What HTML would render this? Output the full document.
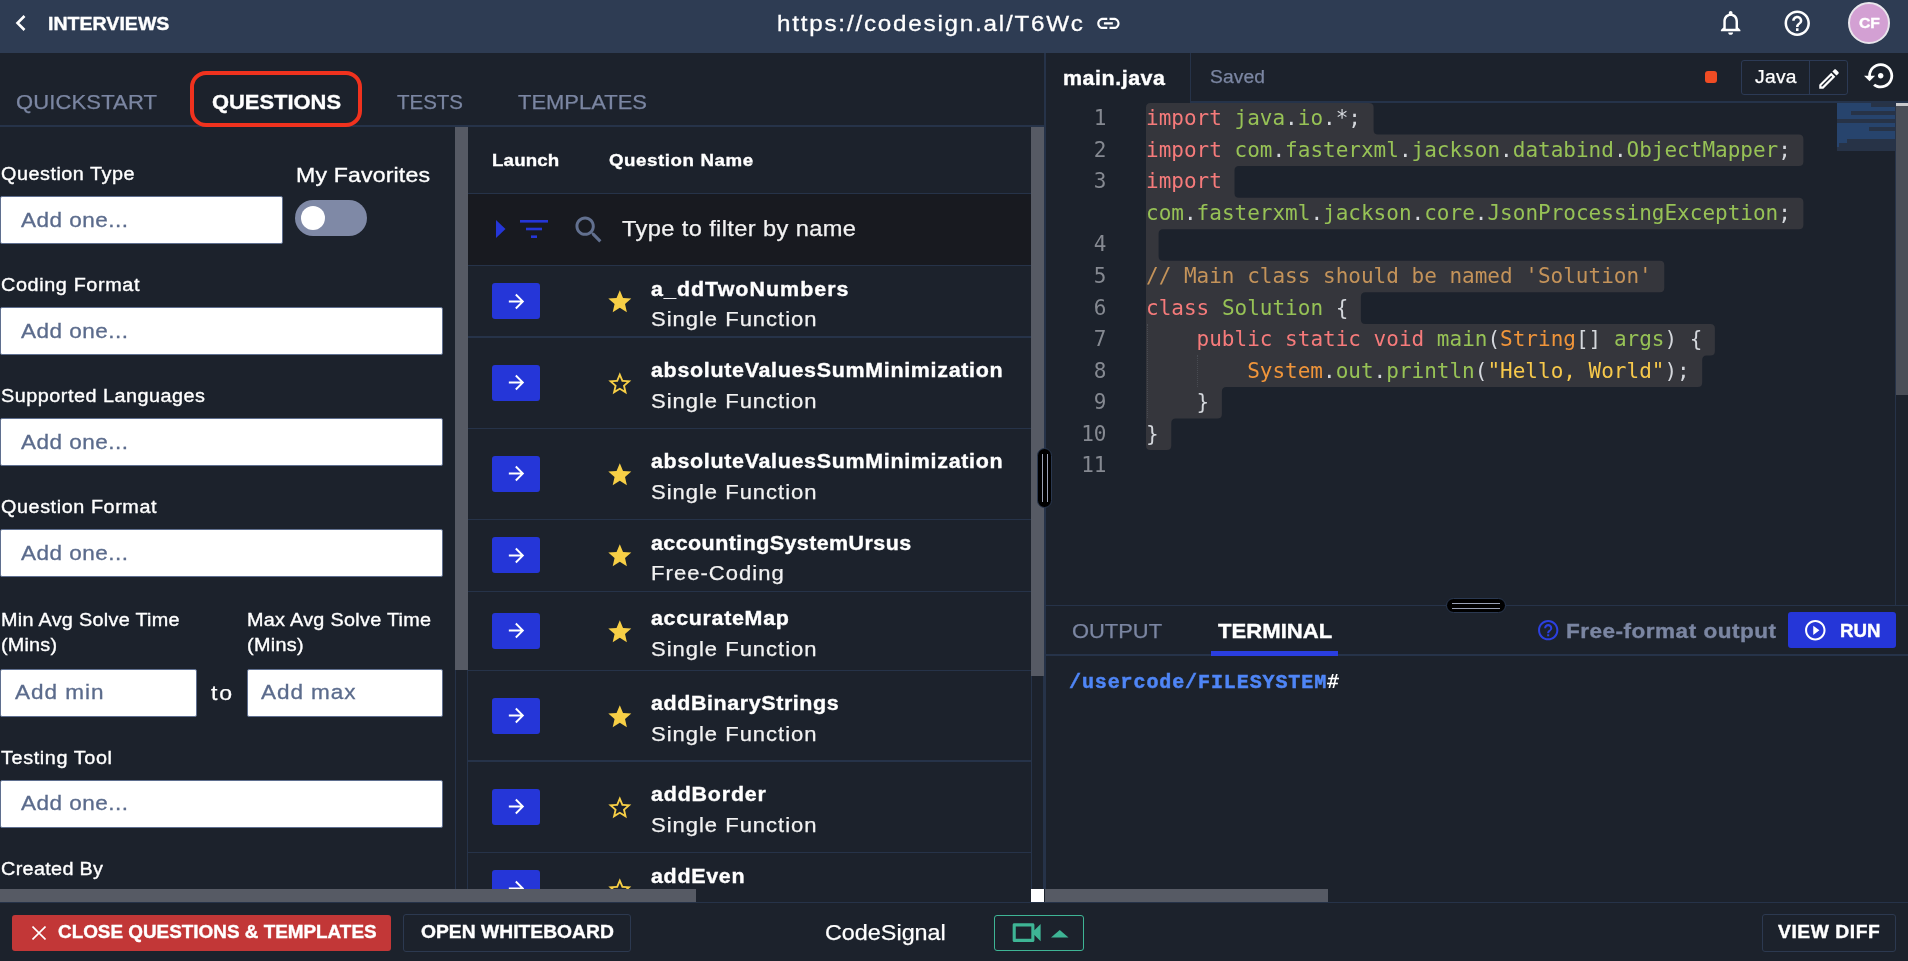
<!DOCTYPE html>
<html lang="en"><head><meta charset="utf-8"><title>CodeSignal Interview</title>
<style>
html,body{margin:0;padding:0;background:#1c222c;}
body{width:1908px;height:961px;position:relative;overflow:hidden;font-family:'Liberation Sans', sans-serif;}
#app{will-change:transform;position:absolute;left:0;top:0;width:1908px;height:961px;}
#app div,#app svg,#app span.t,#app span.c{position:absolute;}
span.t{transform-origin:0 50%;white-space:pre;line-height:1;font-family:'Liberation Sans', sans-serif;}
span.c{white-space:pre;font-family:'DejaVu Sans Mono', 'Liberation Mono', monospace;font-size:21px;line-height:31.5px;}
</style></head>
<body><div id="app">
<div style="left:0px;top:0px;width:1908px;height:53px;background:#2e3c53"></div>
<div style="left:0px;top:125px;width:1045px;height:1.5px;background:#263349"></div>
<div style="left:190px;top:70.5px;width:172px;height:56.5px;box-sizing:border-box;border:4px solid #f0321e;border-radius:16px"></div>
<div style="left:0px;top:196px;width:283px;height:48px;background:#fff;box-sizing:border-box;border:1px solid #5f6f8f;border-radius:2px"></div>
<div style="left:0px;top:307px;width:443px;height:48px;background:#fff;box-sizing:border-box;border:1px solid #5f6f8f;border-radius:2px"></div>
<div style="left:0px;top:418px;width:443px;height:48px;background:#fff;box-sizing:border-box;border:1px solid #5f6f8f;border-radius:2px"></div>
<div style="left:0px;top:529px;width:443px;height:48px;background:#fff;box-sizing:border-box;border:1px solid #5f6f8f;border-radius:2px"></div>
<div style="left:0px;top:669px;width:196.5px;height:47.5px;background:#fff;box-sizing:border-box;border:1px solid #5f6f8f;border-radius:2px"></div>
<div style="left:246.5px;top:669px;width:196.5px;height:47.5px;background:#fff;box-sizing:border-box;border:1px solid #5f6f8f;border-radius:2px"></div>
<div style="left:0px;top:780px;width:443px;height:47.5px;background:#fff;box-sizing:border-box;border:1px solid #5f6f8f;border-radius:2px"></div>
<div style="left:295px;top:200px;width:72px;height:36px;background:#7f89a6;border-radius:18px"></div>
<div style="left:301px;top:206px;width:24px;height:24px;background:#fff;border-radius:12px"></div>
<div style="left:455px;top:670px;width:1px;height:219px;background:#263349"></div>
<div style="left:467px;top:670px;width:1px;height:219px;background:#263349"></div>
<div style="left:455px;top:127px;width:13px;height:543px;background:#565a64"></div>
<div style="left:468px;top:193px;width:563px;height:1.2px;background:#263349"></div>
<div style="left:468px;top:194px;width:563px;height:71px;background:#181a20"></div>
<div style="left:468px;top:336.4px;width:563px;height:1.2px;background:#263349"></div>
<div style="left:468px;top:427.7px;width:563px;height:1.2px;background:#263349"></div>
<div style="left:468px;top:518.6px;width:563px;height:1.2px;background:#263349"></div>
<div style="left:468px;top:590.6px;width:563px;height:1.2px;background:#263349"></div>
<div style="left:468px;top:669.7px;width:563px;height:1.2px;background:#263349"></div>
<div style="left:468px;top:760.4px;width:563px;height:1.2px;background:#263349"></div>
<div style="left:468px;top:851.7px;width:563px;height:1.2px;background:#263349"></div>
<div style="left:468px;top:923.7px;width:563px;height:1.2px;background:#263349"></div>
<div style="left:468px;top:264.6px;width:563px;height:1.2px;background:#263349"></div>
<div style="left:1031px;top:676px;width:1px;height:213px;background:#263349"></div>
<div style="left:1043px;top:676px;width:1px;height:213px;background:#263349"></div>
<div style="left:1031px;top:127px;width:13px;height:549px;background:#565a64"></div>
<div style="left:1044px;top:53px;width:2px;height:849px;background:#263349"></div>
<div style="left:492px;top:283.25px;width:48px;height:36px;background:#2536d8;border-radius:3px"></div>
<svg style="left:504.5px;top:289.75px;" width="23" height="23" viewBox="0 0 24 24"><path fill="#fff" d="M12 4l-1.41 1.41L16.17 11H4v2h12.17l-5.58 5.59L12 20l8-8z"/></svg>
<svg style="left:606.2px;top:288.45px;" width="27.6" height="27.6" viewBox="0 0 24 24"><path fill="#f7cf46" d="M12 17.27L18.18 21l-1.64-7.03L22 9.24l-7.19-.61L12 2 9.19 8.63 2 9.24l5.46 4.73L5.82 21z"/></svg>
<div style="left:492px;top:364.65px;width:48px;height:36px;background:#2536d8;border-radius:3px"></div>
<svg style="left:504.5px;top:371.15px;" width="23" height="23" viewBox="0 0 24 24"><path fill="#fff" d="M12 4l-1.41 1.41L16.17 11H4v2h12.17l-5.58 5.59L12 20l8-8z"/></svg>
<svg style="left:606.2px;top:369.85px;" width="27.6" height="27.6" viewBox="0 0 24 24"><path fill="#f7cf46" d="M22 9.24l-7.19-.62L12 2 9.19 8.63 2 9.24l5.46 4.73L5.82 21 12 17.27 18.18 21l-1.63-7.03L22 9.24zM12 15.4l-3.76 2.27 1-4.28-3.32-2.88 4.38-.38L12 6.1l1.71 4.04 4.38.38-3.32 2.88 1 4.28L12 15.4z"/></svg>
<div style="left:492px;top:455.75px;width:48px;height:36px;background:#2536d8;border-radius:3px"></div>
<svg style="left:504.5px;top:462.25px;" width="23" height="23" viewBox="0 0 24 24"><path fill="#fff" d="M12 4l-1.41 1.41L16.17 11H4v2h12.17l-5.58 5.59L12 20l8-8z"/></svg>
<svg style="left:606.2px;top:460.95px;" width="27.6" height="27.6" viewBox="0 0 24 24"><path fill="#f7cf46" d="M12 17.27L18.18 21l-1.64-7.03L22 9.24l-7.19-.61L12 2 9.19 8.63 2 9.24l5.46 4.73L5.82 21z"/></svg>
<div style="left:492px;top:537.2px;width:48px;height:36px;background:#2536d8;border-radius:3px"></div>
<svg style="left:504.5px;top:543.7px;" width="23" height="23" viewBox="0 0 24 24"><path fill="#fff" d="M12 4l-1.41 1.41L16.17 11H4v2h12.17l-5.58 5.59L12 20l8-8z"/></svg>
<svg style="left:606.2px;top:542.4px;" width="27.6" height="27.6" viewBox="0 0 24 24"><path fill="#f7cf46" d="M12 17.27L18.18 21l-1.64-7.03L22 9.24l-7.19-.61L12 2 9.19 8.63 2 9.24l5.46 4.73L5.82 21z"/></svg>
<div style="left:492px;top:612.75px;width:48px;height:36px;background:#2536d8;border-radius:3px"></div>
<svg style="left:504.5px;top:619.25px;" width="23" height="23" viewBox="0 0 24 24"><path fill="#fff" d="M12 4l-1.41 1.41L16.17 11H4v2h12.17l-5.58 5.59L12 20l8-8z"/></svg>
<svg style="left:606.2px;top:617.95px;" width="27.6" height="27.6" viewBox="0 0 24 24"><path fill="#f7cf46" d="M12 17.27L18.18 21l-1.64-7.03L22 9.24l-7.19-.61L12 2 9.19 8.63 2 9.24l5.46 4.73L5.82 21z"/></svg>
<div style="left:492px;top:697.65px;width:48px;height:36px;background:#2536d8;border-radius:3px"></div>
<svg style="left:504.5px;top:704.15px;" width="23" height="23" viewBox="0 0 24 24"><path fill="#fff" d="M12 4l-1.41 1.41L16.17 11H4v2h12.17l-5.58 5.59L12 20l8-8z"/></svg>
<svg style="left:606.2px;top:702.85px;" width="27.6" height="27.6" viewBox="0 0 24 24"><path fill="#f7cf46" d="M12 17.27L18.18 21l-1.64-7.03L22 9.24l-7.19-.61L12 2 9.19 8.63 2 9.24l5.46 4.73L5.82 21z"/></svg>
<div style="left:492px;top:788.65px;width:48px;height:36px;background:#2536d8;border-radius:3px"></div>
<svg style="left:504.5px;top:795.15px;" width="23" height="23" viewBox="0 0 24 24"><path fill="#fff" d="M12 4l-1.41 1.41L16.17 11H4v2h12.17l-5.58 5.59L12 20l8-8z"/></svg>
<svg style="left:606.2px;top:793.85px;" width="27.6" height="27.6" viewBox="0 0 24 24"><path fill="#f7cf46" d="M22 9.24l-7.19-.62L12 2 9.19 8.63 2 9.24l5.46 4.73L5.82 21 12 17.27 18.18 21l-1.63-7.03L22 9.24zM12 15.4l-3.76 2.27 1-4.28-3.32-2.88 4.38-.38L12 6.1l1.71 4.04 4.38.38-3.32 2.88 1 4.28L12 15.4z"/></svg>
<div style="left:492px;top:870.3px;width:48px;height:36px;background:#2536d8;border-radius:3px"></div>
<svg style="left:504.5px;top:876.8px;" width="23" height="23" viewBox="0 0 24 24"><path fill="#fff" d="M12 4l-1.41 1.41L16.17 11H4v2h12.17l-5.58 5.59L12 20l8-8z"/></svg>
<svg style="left:606.2px;top:875.5px;" width="27.6" height="27.6" viewBox="0 0 24 24"><path fill="#f7cf46" d="M22 9.24l-7.19-.62L12 2 9.19 8.63 2 9.24l5.46 4.73L5.82 21 12 17.27 18.18 21l-1.63-7.03L22 9.24zM12 15.4l-3.76 2.27 1-4.28-3.32-2.88 4.38-.38L12 6.1l1.71 4.04 4.38.38-3.32 2.88 1 4.28L12 15.4z"/></svg>
<svg style="left:9px;top:11.3px;" width="24" height="24" viewBox="0 0 24 24"><path d="M15.5 5 L8.5 12 L15.5 19" fill="none" stroke="#fff" stroke-width="2.6" stroke-linecap="butt"/></svg>
<svg style="left:1094.5px;top:10.1px;" width="26.8" height="26.8" viewBox="0 0 24 24"><path fill="#fff" d="M3.9 12c0-1.71 1.39-3.1 3.1-3.1h4V7H7c-2.76 0-5 2.24-5 5s2.240 5 5 5h4v-1.900H7c-1.710 0-3.100-1.390-3.100-3.100zM8 13h8v-2H8v2zm9-6h-4v1.900h4c1.710 0 3.100 1.390 3.100 3.100s-1.390 3.100-3.100 3.100h-4V17h4c2.760 0 5-2.240 5-5s-2.240-5-5-5z"/></svg>
<svg style="left:1716.3px;top:8px;" width="29.3" height="29.3" viewBox="0 0 24 24"><path fill="#fff" d="M12 22c1.1 0 2-.9 2-2h-4c0 1.1.9 2 2 2zm6-6v-5c0-3.07-1.630-5.640-4.500-6.320V4c0-.83-.67-1.500-1.500-1.500s-1.500.67-1.500 1.500v.68C7.640 5.360 6 7.920 6 11v5l-2 2v1h16v-1l-2-2zm-2 1H8v-6c0-2.480 1.510-4.500 4-4.500s4 2.020 4 4.500v6z"/></svg>
<svg style="left:1781.75px;top:7.75px;" width="30.5" height="30.5" viewBox="0 0 24 24"><path fill="#fff" d="M11 18h2v-2h-2v2zm1-16C6.480 2 2 6.480 2 12s4.480 10 10 10 10-4.480 10-10S17.520 2 12 2zm0 18c-4.410 0-8-3.590-8-8s3.590-8 8-8 8 3.590 8 8-3.590 8-8 8zm0-14c-2.210 0-4 1.790-4 4h2c0-1.100.9-2 2-2s2 .9 2 2c0 2-3 1.750-3 5h2c0-2.250 3-2.500 3-5 0-2.210-1.790-4-4-4z"/></svg>
<div style="left:1848px;top:2px;width:42px;height:42px;box-sizing:border-box;background:#d3a0d3;border:2.5px solid #e9e6ec;border-radius:50%"></div>
<svg style="left:496px;top:220px;" width="10" height="18" viewBox="0 0 10 18"><path d="M0 0 L9.5 9 L0 18z" fill="#2536d8"/></svg>
<svg style="left:520px;top:220px;" width="28" height="18" viewBox="0 0 28 18"><rect x="0" y="0" width="28" height="2.6" fill="#2536d8"/><rect x="6" y="7.7" width="16" height="2.6" fill="#2536d8"/><rect x="11" y="15.4" width="6" height="2.6" fill="#2536d8"/></svg>
<svg style="left:570.5px;top:211.5px;" width="35.7" height="35.7" viewBox="0 0 24 24"><path fill="#62708f" d="M15.5 14h-.79l-.28-.27C15.410 12.590 16 11.110 16 9.500 16 5.910 13.090 3 9.500 3S3 5.910 3 9.500 5.910 16 9.500 16c1.610 0 3.090-.59 4.230-1.570l.27.28v.79l5 4.990L20.490 19l-4.990-5zm-6 0C7.010 14 5 11.990 5 9.500S7.010 5 9.500 5 14 7.010 14 9.500 11.990 14 9.500 14z"/></svg>
<div style="left:1705px;top:71px;width:12.3px;height:12.3px;background:#f04c24;border-radius:3px"></div>
<div style="left:1741px;top:59.5px;width:107px;height:35.5px;box-sizing:border-box;border:1px solid #2c3a55;border-radius:3px"></div>
<div style="left:1809px;top:60px;width:1px;height:34.5px;background:#2c3a55"></div>
<svg style="left:1815.8px;top:66px;" width="26" height="26" viewBox="0 0 24 24"><path fill="#fff" d="M3 17.250V21h3.750L17.810 9.940l-3.750-3.750L3 17.250zM5.920 19H5v-.92l9.060-9.060.92.92L5.920 19zM20.710 5.630l-2.340-2.340c-.2-.2-.45-.29-.71-.29s-.51.1-.7.290l-1.830 1.830 3.750 3.750 1.830-1.830c.39-.39.39-1.020 0-1.410z"/></svg>
<svg style="left:1863.5px;top:58.83px;" width="33.4" height="33.4" viewBox="0 0 24 24"><path fill="#fff" d="M14 12c0-1.100-.9-2-2-2s-2 .9-2 2 .9 2 2 2 2-.9 2-2zm-2-9c-4.970 0-9 4.030-9 9H0l4 4 4-4H5c0-3.870 3.130-7 7-7s7 3.130 7 7-3.130 7-7 7c-1.510 0-2.910-.49-4.060-1.300l-1.420 1.440C8.040 20.300 9.940 21 12 21c4.970 0 9-4.030 9-9s-4.030-9-9-9z"/></svg>
<svg style="left:1535.8px;top:617.8px;" width="24.4" height="24.4" viewBox="0 0 24 24"><path fill="#2c40e0" d="M11 18h2v-2h-2v2zm1-16C6.480 2 2 6.480 2 12s4.480 10 10 10 10-4.480 10-10S17.520 2 12 2zm0 18c-4.410 0-8-3.590-8-8s3.590-8 8-8 8 3.590 8 8-3.590 8-8 8zm0-14c-2.210 0-4 1.790-4 4h2c0-1.100.9-2 2-2s2 .9 2 2c0 2-3 1.750-3 5h2c0-2.250 3-2.500 3-5 0-2.210-1.790-4-4-4z"/></svg>
<div style="left:1788px;top:612px;width:108px;height:36px;background:#2536d8;border-radius:3px"></div>
<svg style="left:1802.7px;top:617.7px;" width="24.6" height="24.6" viewBox="0 0 24 24"><path fill="#fff" d="M10 16.500l6-4.500-6-4.500v9zM12 2C6.480 2 2 6.480 2 12s4.480 10 10 10 10-4.480 10-10S17.520 2 12 2zm0 18c-4.410 0-8-3.590-8-8s3.590-8 8-8 8 3.590 8 8-3.590 8-8 8z"/></svg>
<div style="left:1045px;top:604.6px;width:863px;height:1.4px;background:#263349"></div>
<div style="left:1045px;top:654px;width:863px;height:2px;background:#263349"></div>
<div style="left:1211px;top:651.3px;width:127px;height:4.5px;background:#2a3ee0"></div>
<div style="left:1037px;top:448px;width:15px;height:59.7px;box-sizing:border-box;background:#000;border:1px solid #2a3850;border-radius:8px"></div>
<div style="left:1042.1px;top:454px;width:1.2px;height:48px;background:#9aa1b5"></div>
<div style="left:1047.1px;top:454px;width:1.2px;height:48px;background:#9aa1b5"></div>
<div style="left:1446px;top:597.7px;width:60px;height:15.4px;box-sizing:border-box;background:#000;border:1px solid #2a3850;border-radius:8px"></div>
<div style="left:1452px;top:602.8px;width:48.2px;height:1.3px;background:#9aa1b5"></div>
<div style="left:1452px;top:607.7px;width:48.2px;height:1.3px;background:#9aa1b5"></div>
<svg style="left:0;top:0" width="1908" height="961" viewBox="0 0 1908 961"><path d="M1146.0 107.5 Q1146.0 103.0 1150.5 103.0 L1369.1 103.0 Q1373.6 103.0 1373.6 107.5 L1373.6 130.1 Q1373.6 134.6 1378.1 134.6 L1798.9 134.6 Q1803.4 134.6 1803.4 139.1 L1803.4 161.6 Q1803.4 166.1 1798.9 166.1 L1239.0 166.1 Q1234.5 166.1 1234.5 170.6 L1234.5 193.2 Q1234.5 197.7 1239.0 197.7 L1798.9 197.7 Q1803.4 197.7 1803.4 202.2 L1803.4 224.7 Q1803.4 229.2 1798.9 229.2 L1163.1 229.2 Q1158.6 229.2 1158.6 233.7 L1158.6 256.2 Q1158.6 260.8 1163.1 260.8 L1659.8 260.8 Q1664.3 260.8 1664.3 265.2 L1664.3 287.8 Q1664.3 292.3 1659.8 292.3 L1365.4 292.3 Q1360.9 292.3 1360.9 296.8 L1360.9 319.4 Q1360.9 323.9 1365.4 323.9 L1710.4 323.9 Q1714.9 323.9 1714.9 328.4 L1714.9 350.9 Q1714.9 355.4 1710.4 355.4 L1706.7 355.4 Q1702.2 355.4 1702.2 359.9 L1702.2 382.4 Q1702.2 386.9 1697.7 386.9 L1226.4 386.9 Q1221.9 386.9 1221.9 391.4 L1221.9 414.0 Q1221.9 418.5 1217.4 418.5 L1175.8 418.5 Q1171.3 418.5 1171.3 423.0 L1171.3 445.6 Q1171.3 450.1 1166.8 450.1 L1150.5 450.1 Q1146.0 450.1 1146.0 445.6 Z" fill="#35363c"/></svg>
<span class="c" style="left:1046px;width:60.5px;text-align:right;top:103.2px;color:#858991">1</span>
<span class="c" style="left:1146px;top:103.2px"><span style="color:#f67b7b">import</span><span style="color:#d4d7dc"> </span><span style="color:#97c256">java</span><span style="color:#d4d7dc">.</span><span style="color:#97c256">io</span><span style="color:#d4d7dc">.*;</span></span>
<span class="c" style="left:1046px;width:60.5px;text-align:right;top:134.8px;color:#858991">2</span>
<span class="c" style="left:1146px;top:134.8px"><span style="color:#f67b7b">import</span><span style="color:#d4d7dc"> </span><span style="color:#97c256">com</span><span style="color:#d4d7dc">.</span><span style="color:#97c256">fasterxml</span><span style="color:#d4d7dc">.</span><span style="color:#97c256">jackson</span><span style="color:#d4d7dc">.</span><span style="color:#97c256">databind</span><span style="color:#d4d7dc">.</span><span style="color:#97c256">ObjectMapper</span><span style="color:#d4d7dc">;</span></span>
<span class="c" style="left:1046px;width:60.5px;text-align:right;top:166.3px;color:#858991">3</span>
<span class="c" style="left:1146px;top:166.3px"><span style="color:#f67b7b">import</span><span style="color:#d4d7dc"> </span></span>
<span class="c" style="left:1146px;top:197.8px"><span style="color:#97c256">com</span><span style="color:#d4d7dc">.</span><span style="color:#97c256">fasterxml</span><span style="color:#d4d7dc">.</span><span style="color:#97c256">jackson</span><span style="color:#d4d7dc">.</span><span style="color:#97c256">core</span><span style="color:#d4d7dc">.</span><span style="color:#97c256">JsonProcessingException</span><span style="color:#d4d7dc">;</span></span>
<span class="c" style="left:1046px;width:60.5px;text-align:right;top:229.4px;color:#858991">4</span>
<span class="c" style="left:1046px;width:60.5px;text-align:right;top:260.9px;color:#858991">5</span>
<span class="c" style="left:1146px;top:260.9px"><span style="color:#c4935a">// Main class should be named 'Solution'</span></span>
<span class="c" style="left:1046px;width:60.5px;text-align:right;top:292.5px;color:#858991">6</span>
<span class="c" style="left:1146px;top:292.5px"><span style="color:#f67b7b">class</span><span style="color:#d4d7dc"> </span><span style="color:#97c256">Solution</span><span style="color:#d4d7dc"> {</span></span>
<span class="c" style="left:1046px;width:60.5px;text-align:right;top:324.1px;color:#858991">7</span>
<span class="c" style="left:1146px;top:324.1px"><span style="color:#d4d7dc">    </span><span style="color:#f67b7b">public</span><span style="color:#d4d7dc"> </span><span style="color:#f67b7b">static</span><span style="color:#d4d7dc"> </span><span style="color:#f67b7b">void</span><span style="color:#d4d7dc"> </span><span style="color:#97c256">main</span><span style="color:#d4d7dc">(</span><span style="color:#f0953a">String</span><span style="color:#d4d7dc">[] </span><span style="color:#97c256">args</span><span style="color:#d4d7dc">) {</span></span>
<span class="c" style="left:1046px;width:60.5px;text-align:right;top:355.6px;color:#858991">8</span>
<span class="c" style="left:1146px;top:355.6px"><span style="color:#d4d7dc">        </span><span style="color:#f0953a">System</span><span style="color:#d4d7dc">.</span><span style="color:#97c256">out</span><span style="color:#d4d7dc">.</span><span style="color:#97c256">println</span><span style="color:#d4d7dc">(</span><span style="color:#f7c94b">"Hello, World"</span><span style="color:#d4d7dc">);</span></span>
<span class="c" style="left:1046px;width:60.5px;text-align:right;top:387.1px;color:#858991">9</span>
<span class="c" style="left:1146px;top:387.1px"><span style="color:#d4d7dc">    }</span></span>
<span class="c" style="left:1046px;width:60.5px;text-align:right;top:418.7px;color:#858991">10</span>
<span class="c" style="left:1146px;top:418.7px"><span style="color:#d4d7dc">}</span></span>
<span class="c" style="left:1046px;width:60.5px;text-align:right;top:450.2px;color:#858991">11</span>
<div style="left:1146.5px;top:323.85px;width:0px;height:94.65px;border-left:1px dotted #484b52"></div>
<div style="left:1196.57px;top:355.4px;width:0px;height:31.55px;border-left:1px dotted #484b52"></div>
<div style="left:1190px;top:53px;width:1px;height:49px;background:#263349"></div>
<div style="left:1190px;top:101px;width:718px;height:2px;background:#25334a"></div>
<div style="left:1837px;top:103px;width:58px;height:48px;background:#273347"></div>
<div style="left:1837px;top:103px;width:34px;height:4px;background:#27446d"></div>
<div style="left:1837px;top:107px;width:58px;height:4px;background:#27446d"></div>
<div style="left:1837px;top:111px;width:14px;height:4px;background:#27446d"></div>
<div style="left:1837px;top:115px;width:58px;height:4px;background:#27446d"></div>
<div style="left:1837px;top:123px;width:58px;height:4px;background:#27446d"></div>
<div style="left:1837px;top:127px;width:32px;height:4px;background:#27446d"></div>
<div style="left:1837px;top:131px;width:58px;height:4px;background:#27446d"></div>
<div style="left:1837px;top:135px;width:58px;height:4px;background:#27446d"></div>
<div style="left:1837px;top:139px;width:10px;height:4px;background:#27446d"></div>
<div style="left:1837px;top:143px;width:2px;height:4px;background:#27446d"></div>
<div style="left:1895px;top:103px;width:1px;height:502px;background:#263349"></div>
<div style="left:1895.5px;top:103px;width:12.5px;height:292px;background:#4a4e57"></div>
<div style="left:1896px;top:103px;width:12px;height:3px;background:#c8c9cc"></div>
<span class="t" style="left:1069px;top:670.6px;font-family:'Liberation Mono', monospace;font-size:20px;font-weight:700;color:#4f86f7;letter-spacing:0.9px;-webkit-text-stroke:0.5px #4f86f7">/usercode/FILESYSTEM<span style="font-family:'DejaVu Sans Mono', 'Liberation Mono', monospace;font-weight:400;color:#fff;font-size:20px;-webkit-text-stroke:0">#</span></span>
<span class="t" style="left:48.4px;top:14.8px;font-size:18px;font-weight:700;color:#fff;letter-spacing:0.00px;transform:scaleX(1.087);-webkit-text-stroke:0.35px #fff;">INTERVIEWS</span>
<span class="t" style="left:777.0px;top:13.3px;font-size:22px;font-weight:400;color:#fff;letter-spacing:1.62px;transform:scaleX(1.100);-webkit-text-stroke:0.3px #fff;">https://codesign.al/T6Wc</span>
<span class="t" style="left:16.0px;top:92.1px;font-size:20px;font-weight:400;color:#7b86a2;letter-spacing:0.12px;transform:scaleX(1.100);-webkit-text-stroke:0.25px #7b86a2;">QUICKSTART</span>
<span class="t" style="left:212.0px;top:92.1px;font-size:20px;font-weight:700;color:#fff;letter-spacing:0.00px;transform:scaleX(1.095);-webkit-text-stroke:0.35px #fff;">QUESTIONS</span>
<span class="t" style="left:397.0px;top:92.1px;font-size:20px;font-weight:400;color:#7b86a2;letter-spacing:0.00px;transform:scaleX(1.024);-webkit-text-stroke:0.25px #7b86a2;">TESTS</span>
<span class="t" style="left:518.0px;top:92.1px;font-size:20px;font-weight:400;color:#7b86a2;letter-spacing:0.00px;transform:scaleX(1.098);-webkit-text-stroke:0.25px #7b86a2;">TEMPLATES</span>
<span class="t" style="left:1.0px;top:164.8px;font-size:18px;font-weight:400;color:#fff;letter-spacing:0.47px;transform:scaleX(1.100);-webkit-text-stroke:0.35px #fff;">Question Type</span>
<span class="t" style="left:296.0px;top:164.1px;font-size:21px;font-weight:400;color:#fff;letter-spacing:0.15px;transform:scaleX(1.100);-webkit-text-stroke:0.35px #fff;">My Favorites</span>
<span class="t" style="left:1.0px;top:275.8px;font-size:18px;font-weight:400;color:#fff;letter-spacing:0.57px;transform:scaleX(1.100);-webkit-text-stroke:0.35px #fff;">Coding Format</span>
<span class="t" style="left:1.0px;top:386.8px;font-size:18px;font-weight:400;color:#fff;letter-spacing:0.46px;transform:scaleX(1.100);-webkit-text-stroke:0.35px #fff;">Supported Languages</span>
<span class="t" style="left:1.0px;top:497.8px;font-size:18px;font-weight:400;color:#fff;letter-spacing:0.52px;transform:scaleX(1.100);-webkit-text-stroke:0.35px #fff;">Question Format</span>
<span class="t" style="left:1.0px;top:611.0px;font-size:18px;font-weight:400;color:#fff;letter-spacing:0.27px;transform:scaleX(1.100);-webkit-text-stroke:0.35px #fff;">Min Avg Solve Time</span>
<span class="t" style="left:1.0px;top:635.5px;font-size:18px;font-weight:400;color:#fff;letter-spacing:0.18px;transform:scaleX(1.100);-webkit-text-stroke:0.35px #fff;">(Mins)</span>
<span class="t" style="left:246.5px;top:611.0px;font-size:18px;font-weight:400;color:#fff;letter-spacing:0.27px;transform:scaleX(1.100);-webkit-text-stroke:0.35px #fff;">Max Avg Solve Time</span>
<span class="t" style="left:247.0px;top:635.5px;font-size:18px;font-weight:400;color:#fff;letter-spacing:0.27px;transform:scaleX(1.100);-webkit-text-stroke:0.35px #fff;">(Mins)</span>
<span class="t" style="left:1.0px;top:748.5px;font-size:18px;font-weight:400;color:#fff;letter-spacing:0.56px;transform:scaleX(1.100);-webkit-text-stroke:0.35px #fff;">Testing Tool</span>
<span class="t" style="left:1.0px;top:859.5px;font-size:18px;font-weight:400;color:#fff;letter-spacing:0.30px;transform:scaleX(1.100);-webkit-text-stroke:0.35px #fff;">Created By</span>
<span class="t" style="left:20.5px;top:209.6px;font-size:20.5px;font-weight:400;color:#5b6b8c;letter-spacing:0.42px;transform:scaleX(1.100);-webkit-text-stroke:0.3px #5b6b8c;">Add one...</span>
<span class="t" style="left:20.5px;top:320.6px;font-size:20.5px;font-weight:400;color:#5b6b8c;letter-spacing:0.42px;transform:scaleX(1.100);-webkit-text-stroke:0.3px #5b6b8c;">Add one...</span>
<span class="t" style="left:20.5px;top:431.6px;font-size:20.5px;font-weight:400;color:#5b6b8c;letter-spacing:0.42px;transform:scaleX(1.100);-webkit-text-stroke:0.3px #5b6b8c;">Add one...</span>
<span class="t" style="left:20.5px;top:542.6px;font-size:20.5px;font-weight:400;color:#5b6b8c;letter-spacing:0.42px;transform:scaleX(1.100);-webkit-text-stroke:0.3px #5b6b8c;">Add one...</span>
<span class="t" style="left:20.5px;top:793.1px;font-size:20.5px;font-weight:400;color:#5b6b8c;letter-spacing:0.42px;transform:scaleX(1.100);-webkit-text-stroke:0.3px #5b6b8c;">Add one...</span>
<span class="t" style="left:14.5px;top:682.1px;font-size:20.5px;font-weight:400;color:#5b6b8c;letter-spacing:0.87px;transform:scaleX(1.100);-webkit-text-stroke:0.3px #5b6b8c;">Add min</span>
<span class="t" style="left:260.5px;top:682.1px;font-size:20.5px;font-weight:400;color:#5b6b8c;letter-spacing:0.83px;transform:scaleX(1.100);-webkit-text-stroke:0.3px #5b6b8c;">Add max</span>
<span class="t" style="left:211.0px;top:681.7px;font-size:21px;font-weight:400;color:#fff;letter-spacing:1.58px;transform:scaleX(1.100);-webkit-text-stroke:0.25px #fff;">to</span>
<span class="t" style="left:492.2px;top:151.6px;font-size:17px;font-weight:700;color:#fff;letter-spacing:0.14px;transform:scaleX(1.100);-webkit-text-stroke:0.35px #fff;">Launch</span>
<span class="t" style="left:608.5px;top:151.6px;font-size:17px;font-weight:700;color:#fff;letter-spacing:0.52px;transform:scaleX(1.100);-webkit-text-stroke:0.35px #fff;">Question Name</span>
<span class="t" style="left:622.0px;top:219.4px;font-size:21.5px;font-weight:400;color:#f2f2f2;letter-spacing:0.34px;transform:scaleX(1.100);-webkit-text-stroke:0.25px #f2f2f2;">Type to filter by name</span>
<span class="t" style="left:650.5px;top:279.7px;font-size:19.5px;font-weight:700;color:#fff;letter-spacing:0.92px;transform:scaleX(1.100);-webkit-text-stroke:0.35px #fff;">a_ddTwoNumbers</span>
<span class="t" style="left:650.5px;top:309.4px;font-size:20px;font-weight:400;color:#f2f2f2;letter-spacing:0.90px;transform:scaleX(1.100);-webkit-text-stroke:0.25px #f2f2f2;">Single Function</span>
<span class="t" style="left:650.5px;top:361.1px;font-size:19.5px;font-weight:700;color:#fff;letter-spacing:0.62px;transform:scaleX(1.100);-webkit-text-stroke:0.35px #fff;">absoluteValuesSumMinimization</span>
<span class="t" style="left:650.5px;top:390.8px;font-size:20px;font-weight:400;color:#f2f2f2;letter-spacing:0.90px;transform:scaleX(1.100);-webkit-text-stroke:0.25px #f2f2f2;">Single Function</span>
<span class="t" style="left:650.5px;top:452.2px;font-size:19.5px;font-weight:700;color:#fff;letter-spacing:0.62px;transform:scaleX(1.100);-webkit-text-stroke:0.35px #fff;">absoluteValuesSumMinimization</span>
<span class="t" style="left:650.5px;top:481.9px;font-size:20px;font-weight:400;color:#f2f2f2;letter-spacing:0.90px;transform:scaleX(1.100);-webkit-text-stroke:0.25px #f2f2f2;">Single Function</span>
<span class="t" style="left:650.5px;top:533.7px;font-size:19.5px;font-weight:700;color:#fff;letter-spacing:0.39px;transform:scaleX(1.100);-webkit-text-stroke:0.35px #fff;">accountingSystemUrsus</span>
<span class="t" style="left:650.5px;top:563.4px;font-size:20px;font-weight:400;color:#f2f2f2;letter-spacing:0.96px;transform:scaleX(1.100);-webkit-text-stroke:0.25px #f2f2f2;">Free-Coding</span>
<span class="t" style="left:650.5px;top:609.2px;font-size:19.5px;font-weight:700;color:#fff;letter-spacing:0.61px;transform:scaleX(1.100);-webkit-text-stroke:0.35px #fff;">accurateMap</span>
<span class="t" style="left:650.5px;top:638.9px;font-size:20px;font-weight:400;color:#f2f2f2;letter-spacing:0.90px;transform:scaleX(1.100);-webkit-text-stroke:0.25px #f2f2f2;">Single Function</span>
<span class="t" style="left:650.5px;top:694.1px;font-size:19.5px;font-weight:700;color:#fff;letter-spacing:0.54px;transform:scaleX(1.100);-webkit-text-stroke:0.35px #fff;">addBinaryStrings</span>
<span class="t" style="left:650.5px;top:723.8px;font-size:20px;font-weight:400;color:#f2f2f2;letter-spacing:0.90px;transform:scaleX(1.100);-webkit-text-stroke:0.25px #f2f2f2;">Single Function</span>
<span class="t" style="left:650.5px;top:785.1px;font-size:19.5px;font-weight:700;color:#fff;letter-spacing:0.73px;transform:scaleX(1.100);-webkit-text-stroke:0.35px #fff;">addBorder</span>
<span class="t" style="left:650.5px;top:814.8px;font-size:20px;font-weight:400;color:#f2f2f2;letter-spacing:0.90px;transform:scaleX(1.100);-webkit-text-stroke:0.25px #f2f2f2;">Single Function</span>
<span class="t" style="left:650.5px;top:866.8px;font-size:19.5px;font-weight:700;color:#fff;letter-spacing:0.62px;transform:scaleX(1.100);-webkit-text-stroke:0.35px #fff;">addEven</span>
<span class="t" style="left:650.5px;top:896.5px;font-size:20px;font-weight:400;color:#f2f2f2;letter-spacing:0.90px;transform:scaleX(1.100);-webkit-text-stroke:0.25px #f2f2f2;">Single Function</span>
<span class="t" style="left:1062.5px;top:68.5px;font-size:19.5px;font-weight:700;color:#fff;letter-spacing:0.48px;transform:scaleX(1.100);-webkit-text-stroke:0.35px #fff;">main.java</span>
<span class="t" style="left:1209.5px;top:68.9px;font-size:17.5px;font-weight:400;color:#7b86a2;letter-spacing:0.09px;transform:scaleX(1.100);-webkit-text-stroke:0.25px #7b86a2;">Saved</span>
<span class="t" style="left:1755.0px;top:68.9px;font-size:17.5px;font-weight:400;color:#fff;letter-spacing:0.25px;transform:scaleX(1.100);-webkit-text-stroke:0.25px #fff;">Java</span>
<span class="t" style="left:1072.0px;top:620.6px;font-size:20.5px;font-weight:400;color:#7b86a2;letter-spacing:0.00px;transform:scaleX(1.068);-webkit-text-stroke:0.25px #7b86a2;">OUTPUT</span>
<span class="t" style="left:1217.5px;top:620.6px;font-size:20.5px;font-weight:700;color:#fff;letter-spacing:0.00px;transform:scaleX(1.079);-webkit-text-stroke:0.35px #fff;">TERMINAL</span>
<span class="t" style="left:1566.0px;top:620.6px;font-size:20.5px;font-weight:700;color:#7b86a2;letter-spacing:0.44px;transform:scaleX(1.100);-webkit-text-stroke:0.35px #7b86a2;">Free-format output</span>
<span class="t" style="left:1839.8px;top:621.8px;font-size:18px;font-weight:700;color:#fff;letter-spacing:0.00px;transform:scaleX(1.038);-webkit-text-stroke:0.35px #fff;">RUN</span>
<div style="left:0px;top:889px;width:1908px;height:13px;background:#1c222c"></div>
<div style="left:0px;top:889px;width:695.8px;height:13px;background:#565a64"></div>
<div style="left:1031px;top:889px;width:13.3px;height:13px;background:#fff"></div>
<div style="left:1045px;top:889px;width:283px;height:13px;background:#565a64"></div>
<div style="left:0px;top:902px;width:1908px;height:1.2px;background:#263349"></div>
<div style="left:0px;top:903.2px;width:1908px;height:58px;background:#1c222c"></div>
<div style="left:12px;top:915px;width:379px;height:36px;background:#c23737;border-radius:3px"></div>
<svg style="left:32px;top:926px;" width="14" height="14" viewBox="0 0 14 14"><path d="M0.5 0.5 L13.5 13.5 M13.5 0.5 L0.5 13.5" stroke="#fff" stroke-width="1.6" fill="none"/></svg>
<div style="left:403px;top:913.5px;width:227.5px;height:38px;box-sizing:border-box;border:1px solid #2c3950;border-radius:3px"></div>
<div style="left:1761.5px;top:913.5px;width:134.5px;height:38px;box-sizing:border-box;border:1px solid #2c3950;border-radius:3px"></div>
<div style="left:994px;top:915.3px;width:90px;height:35.5px;box-sizing:border-box;border:1.5px solid #3eb595;border-radius:3px"></div>
<svg style="left:1008.33px;top:914.328px;" width="37.3" height="37.3" viewBox="0 0 24 24"><path fill="#3eb595" d="M15 8v8H5V8h10m1-2H4c-.55 0-1 .45-1 1v10c0 .55.45 1 1 1h12c.55 0 1-.45 1-1v-3.500l4 4v-11l-4 4V7c0-.55-.45-1-1-1z"/></svg>
<svg style="left:1051px;top:930px;" width="17.5" height="7.5" viewBox="0 0 17.5 7.5"><path d="M0 7.5 L8.75 0 L17.5 7.5z" fill="#3eb595"/></svg>
<span class="t" style="left:57.5px;top:924.2px;font-size:17.5px;font-weight:700;color:#fff;letter-spacing:0.00px;transform:scaleX(1.079);-webkit-text-stroke:0.35px #fff;">CLOSE QUESTIONS &amp; TEMPLATES</span>
<span class="t" style="left:420.8px;top:924.2px;font-size:17.5px;font-weight:700;color:#fff;letter-spacing:0.02px;transform:scaleX(1.100);-webkit-text-stroke:0.35px #fff;">OPEN WHITEBOARD</span>
<span class="t" style="left:824.5px;top:921.8px;font-size:22px;font-weight:400;color:#fff;letter-spacing:0.00px;transform:scaleX(1.062);-webkit-text-stroke:0.25px #fff;">CodeSignal</span>
<span class="t" style="left:1777.5px;top:924.2px;font-size:17.5px;font-weight:700;color:#fff;letter-spacing:0.50px;transform:scaleX(1.100);-webkit-text-stroke:0.35px #fff;">VIEW DIFF</span>
<span class="t" style="left:1859.0px;top:15.9px;font-size:14.5px;font-weight:700;color:#fff;letter-spacing:0.00px;transform:scaleX(1.086);-webkit-text-stroke:0.35px #fff;">CF</span>
</div></body></html>
